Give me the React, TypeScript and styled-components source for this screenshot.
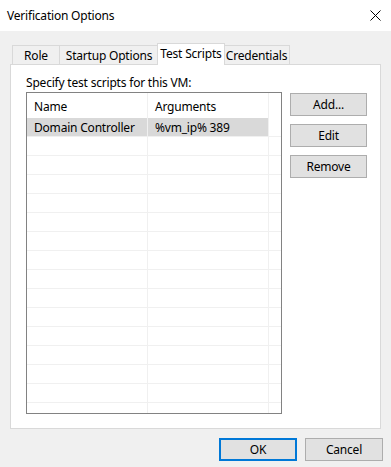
import { Fragment } from "react";
import styled, { createGlobalStyle } from "styled-components";

// 창 전체 기본 스타일
const GlobalStyle = createGlobalStyle`
  html, body {
    margin: 0;
    padding: 0;
    background: #f0f0f0;
  }
  body {
    font-family: "Noto Sans", "Open Sans", sans-serif;
    font-size: 12px;
    color: #000;
  }
`;

const Window = styled.div`
  width: 391px;
  height: 467px;
  display: flex;
  flex-direction: column;
  background: #f0f0f0;
  overflow: hidden;
`;

const TitleBar = styled.div`
  height: 31px;
  flex: none;
  background: #fff;
  display: flex;
  align-items: center;
  justify-content: space-between;
  padding: 0 6px 0 7px;
`;

const TitleText = styled.span`
  font-size: 12px;
  letter-spacing: -0.2px;
`;

const CloseButton = styled.div`
  width: 20px;
  height: 20px;
  display: flex;
  align-items: center;
  justify-content: center;
`;

const Body = styled.div`
  flex: 1;
  display: flex;
  flex-direction: column;
  padding: 12px 10px 0 10px;
`;

const TabStrip = styled.div`
  height: 21px;
  display: flex;
  align-items: flex-end;
  padding-left: 2px;
`;

const Tab = styled.div<{ $width: number; $active?: boolean }>`
  box-sizing: border-box;
  width: ${(p) => p.$width}px;
  height: ${(p) => (p.$active ? 22 : 19)}px;
  margin-bottom: ${(p) => (p.$active ? -1 : 0)}px;
  margin-left: ${(p) => (p.$active ? -2 : -1)}px;
  margin-right: ${(p) => (p.$active ? -1 : 0)}px;
  border: 1px solid #d9d9d9;
  border-bottom: none;
  background: ${(p) => (p.$active ? "#fff" : "#f0f0f0")};
  position: relative;
  z-index: ${(p) => (p.$active ? 1 : 0)};
  display: flex;
  justify-content: center;
  align-items: center;
  padding-bottom: ${(p) => (p.$active ? 3 : 0)}px;
  letter-spacing: -0.2px;
  white-space: nowrap;

  &:first-child {
    margin-left: 0;
  }
`;

const Panel = styled.div`
  box-sizing: border-box;
  height: 365px;
  background: #fff;
  border: 1px solid #d9d9d9;
  padding: 9px 0 0 15px;
  display: flex;
  flex-direction: column;
`;

const Label = styled.div`
  height: 18px;
  line-height: 17px;
  letter-spacing: -0.2px;
`;

const ContentRow = styled.div`
  display: flex;
  gap: 8px;
`;

const ListBox = styled.div`
  box-sizing: border-box;
  width: 256px;
  height: 322px;
  border: 1px solid #828282;
  overflow: hidden;
  display: grid;
  grid-template-columns: 121px 121px 1fr;
  grid-auto-rows: 19px;
  grid-template-rows: 25px;
`;

const Cell = styled.div<{ $header?: boolean; $selected?: boolean; $last?: boolean }>`
  box-sizing: border-box;
  border-right: ${(p) => (p.$last ? "none" : "1px solid #f0f0f0")};
  border-bottom: ${(p) => (p.$header ? "none" : "1px solid #f0f0f0")};
  background: ${(p) => (p.$selected ? "#d9d9d9" : "#fff")};
  padding-left: 7px;
  display: flex;
  align-items: center;
  white-space: nowrap;
  overflow: hidden;
  letter-spacing: -0.2px;
  padding-top: ${(p) => (p.$header ? 1 : 0)}px;
`;

const ButtonColumn = styled.div`
  display: flex;
  flex-direction: column;
  gap: 8px;
  padding-top: 1px;
`;

const Button = styled.button<{ $default?: boolean; $width?: number }>`
  box-sizing: border-box;
  width: ${(p) => p.$width ?? 77}px;
  height: 23px;
  margin: 0;
  padding: 0 0 1px;
  background: #e1e1e1;
  border: ${(p) => (p.$default ? "2px solid #0078d7" : "1px solid #adadad")};
  font-family: inherit;
  font-size: 12px;
  color: #000;
  letter-spacing: -0.2px;
`;

const Footer = styled.div`
  display: flex;
  justify-content: flex-end;
  gap: 8px;
  padding-top: 9px;
  margin-right: -2px;
`;

const scripts = [{ name: "Domain Controller", args: "%vm_ip% 389" }];
const EMPTY_ROWS = 15;

function App() {
  const rows = [...scripts, ...Array.from({ length: EMPTY_ROWS }, () => null)];

  return (
    <Window>
      <GlobalStyle />
      <TitleBar>
        <TitleText>Verification Options</TitleText>
        <CloseButton>
          <svg width="11" height="11" viewBox="0 0 11 11">
            <path d="M0.5 0.5 L10.5 10.5 M10.5 0.5 L0.5 10.5" stroke="#000" strokeWidth="1" fill="none" />
          </svg>
        </CloseButton>
      </TitleBar>
      <Body>
        <TabStrip>
          <Tab $width={48}>Role</Tab>
          <Tab $width={100}>Startup Options</Tab>
          <Tab $width={68} $active>
            Test Scripts
          </Tab>
          <Tab $width={67}>Credentials</Tab>
        </TabStrip>
        <Panel>
          <Label>Specify test scripts for this VM:</Label>
          <ContentRow>
            <ListBox>
              <Cell $header>Name</Cell>
              <Cell $header>Arguments</Cell>
              <Cell $header $last />
              {rows.map((row, i) => (
                <Fragment key={i}>
                  <Cell $selected={i === 0}>{row?.name}</Cell>
                  <Cell $selected={i === 0}>{row?.args}</Cell>
                  <Cell $last />
                </Fragment>
              ))}
            </ListBox>
            <ButtonColumn>
              <Button>Add...</Button>
              <Button>Edit</Button>
              <Button>Remove</Button>
            </ButtonColumn>
          </ContentRow>
        </Panel>
        <Footer>
          <Button $default $width={78}>
            OK
          </Button>
          <Button $width={78}>Cancel</Button>
        </Footer>
      </Body>
    </Window>
  );
}

export default App;
